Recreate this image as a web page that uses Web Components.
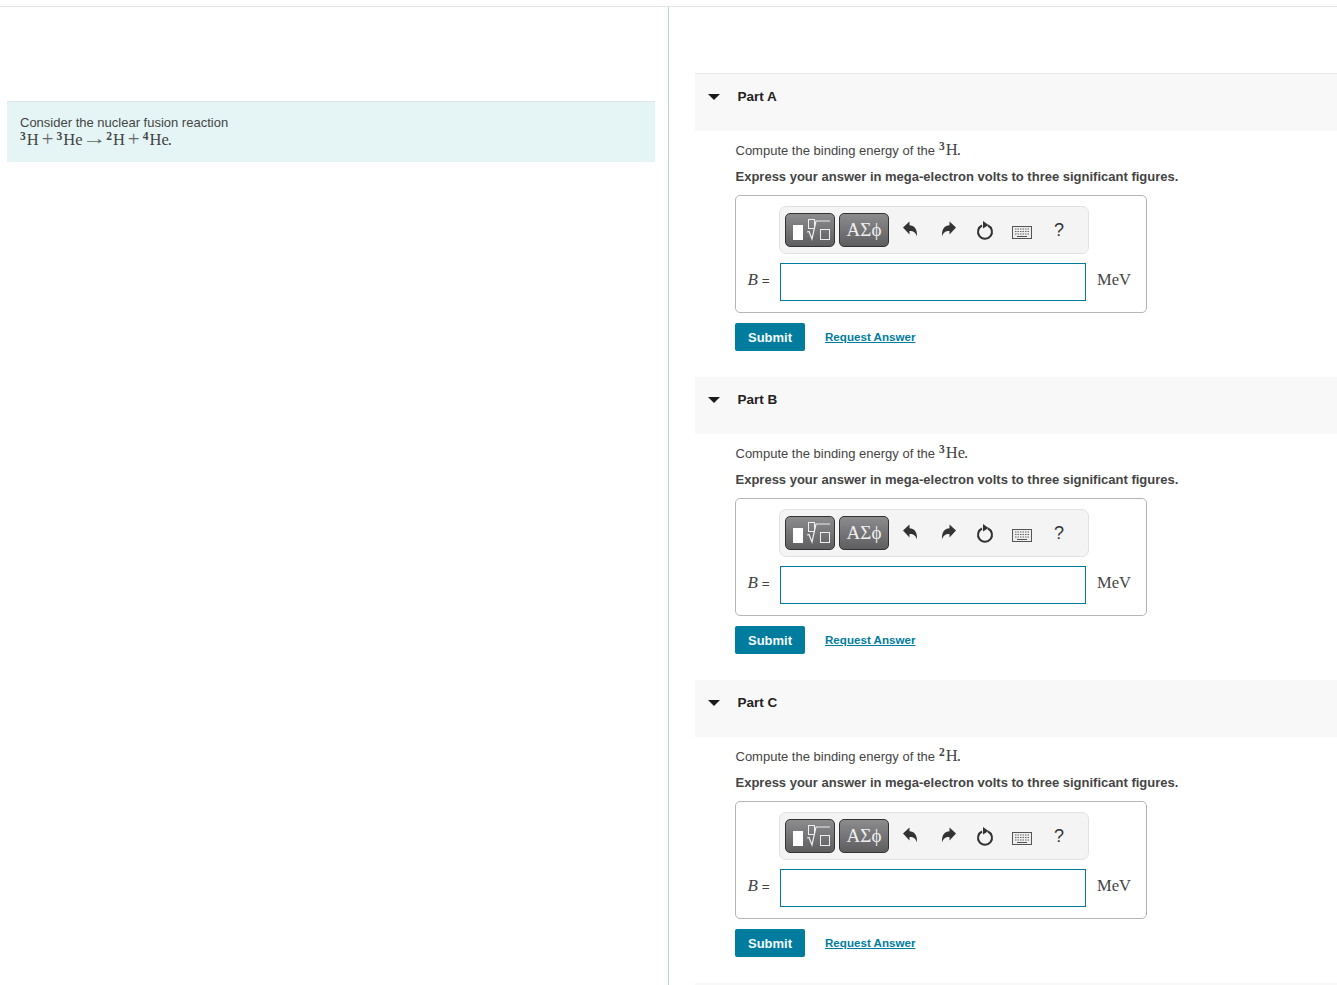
<!DOCTYPE html>
<html lang="en"><head><meta charset="utf-8"><title>Nuclear fusion</title>
<style>
html,body{margin:0;padding:0;background:#fff}
body{font-family:"Liberation Sans",Arial,sans-serif;color:#333;height:985px;overflow:hidden}
</style></head><body>
<m-app>
  <m-intro slot="left">Consider the nuclear fusion reaction<br><m-math style="margin-top:1px"><sup>3</sup>H<i>+</i><sup>3</sup>He<i class="a">→</i><sup>2</sup>H<i>+</i><sup>4</sup>He<span class="dot">.</span></m-math></m-intro>
  <m-part slot="right" name="Part A" iso="3" el="H" first></m-part>
  <m-part slot="right" name="Part B" iso="3" el="He"></m-part>
  <m-part slot="right" name="Part C" iso="2" el="H"></m-part>
  <m-end slot="right"></m-end>
</m-app>
<script>
const def=(name,html)=>customElements.define(name,class extends HTMLElement{
  connectedCallback(){ if(this.shadowRoot) return; const r=this.attachShadow({mode:'open'}); r.innerHTML=typeof html==='function'?html(this):html; }
});
def('m-app',`<style>
:host{display:block}
.top{height:6px;border-bottom:1px solid #e2e6e9}
.main{display:flex;height:978px;overflow:hidden}
.l{width:648px;padding:94px 13px 0 7px;border-right:1px solid #bcd0e0;flex:none}
.r{flex:1;padding:66px 0 0 26px;min-width:0;display:flex;flex-direction:column;gap:26px}
</style><div class="top"></div><div class="main"><div class="l"><slot name="left"></slot></div><div class="r"><slot name="right"></slot></div></div>`);
def('m-end',`<style>:host{display:block;height:3px;flex:none;border-top:1px solid #fff;background:#f8f8f8}</style>`);
def('m-math',`<style>
:host{display:inline-block;font-family:"Liberation Serif","Times New Roman",serif;font-size:16.5px;line-height:16px;color:#444}
::slotted(sup){font-size:11.5px;font-weight:700;vertical-align:5px;line-height:0;margin-right:1px}
::slotted(i){display:inline-block;font-style:normal;font-size:16px;line-height:16px;margin:0 4.4px;color:#666;transform:scale(1.3,1.25)}
::slotted(i.a){font-size:17px;margin:0 3.4px;transform:scaleX(1.45) translateY(-1px)}
::slotted(.dot){margin-left:-1px}
</style><slot></slot>`);
def('m-intro',`<style>
:host{display:block;height:60px;border-top:1px solid #dfe6e8;background:#e5f5f6;font-size:13px;line-height:16px;color:#444}
.i{padding:13px 13px 0}
</style><div class="i"><slot></slot></div>`);
const rootIcon=`<svg width="48" height="32" viewBox="0 0 48 32" aria-hidden="true"><rect x="7" y="11" width="10" height="15" fill="#fff"/><rect x="22.500" y="5.500" width="6" height="9" fill="none" stroke="#eee"/><path d="M21 18l2-.5 3 7.500 4-18h14" fill="none" stroke="#eee" stroke-width="1.200"/><rect x="34.500" y="15.500" width="9" height="10" fill="none" stroke="#eee"/></svg>`;
def('m-part',el=>`<style>
:host{display:block;width:642px;height:277px;flex:none;font-size:13px;line-height:18px;color:#444}
.hd{height:58px;box-sizing:border-box;border-top:1px solid ${el.hasAttribute('first')?'#e3e6e8':'#fff'};background:#f8f8f8;display:flex;align-items:center;padding-bottom:11px}
.tri{width:0;height:0;border:6px solid transparent;border-top:6px solid #1a1a1a;border-bottom:0;margin:0 17.500px 0 13px}
.hd b{font-size:13.5px;color:#222;font-weight:700}
.ct{padding:8px 0 0 40.500px}
.q{height:24px;line-height:24px;display:flex;align-items:center}
.q m-math{margin-left:4px;position:relative;top:-1px}
.ex{font-weight:700;margin:4px 0 0;height:20px;line-height:20px;color:#444;font-size:13px}
.box{box-sizing:border-box;width:412px;height:118px;margin:8px 0 0 -.5px;border:1px solid #b5b5b5;border-radius:5px;padding:10px 0 0 43px}
.tb{box-sizing:border-box;width:310px;height:48px;border:1px solid #e1e1e1;border-radius:7px;background:#f4f4f4;display:flex;align-items:center;padding:0 0 1px 5px}
.btn{box-sizing:border-box;width:50px;height:34px;border:1px solid #333;border-radius:5px;background:linear-gradient(#8c8c8e,#5e5e60);margin-right:4px;display:flex;align-items:center;justify-content:center;color:#eee;font:19px "Liberation Serif",serif;overflow:hidden;flex:none}
.ic{width:37px;height:24px;display:flex;align-items:center;justify-content:center;flex:none}
.ic.q2{font-size:18px;color:#333;font-family:"Liberation Sans",sans-serif}
.ic.kb{padding-top:5px;box-sizing:border-box}
.row{display:flex;align-items:center;height:38px;margin:9px 0 0 -43px}
.lab{width:44px;padding:0 0 4px 11.500px;box-sizing:border-box;white-space:nowrap;font-size:13.5px;color:#444}
.lab i{font:italic 17px "Liberation Serif",serif}
.inp{box-sizing:border-box;width:306px;height:38px;border:1px solid #007c9e;background:#fff;flex:none}
.mev{margin-left:11px;padding-bottom:3px;font:16.500px/1 "Liberation Serif",serif;color:#444}
.act{display:flex;align-items:center;margin:10px 0 0 -.5px;height:28px}
.sub{box-sizing:border-box;width:70px;height:28px;background:#007c9e;color:#f5fbfd;border:0;border-radius:2px;font:700 13px "Liberation Sans",sans-serif;padding:0}
a{margin-left:20px;font-size:11.600px;font-weight:700;color:#007c9e;text-decoration:underline}
</style>
<div class="hd"><span class="tri"></span><b>${el.getAttribute('name')}</b></div>
<div class="ct">
<div class="q">Compute the binding energy of the<m-math><sup style="font-size:11.500px;font-weight:700;vertical-align:5px;line-height:0;margin-right:1px">${el.getAttribute('iso')}</sup>${el.getAttribute('el')}<span style="margin-left:-1px">.</span></m-math></div>
<div class="ex">Express your answer in mega-electron volts to three significant figures.</div>
<div class="box">
<div class="tb">
<div class="btn">${rootIcon}</div><div class="btn">ΑΣϕ</div>
<div class="ic" style="margin-left:-1.500px"><svg width="16" height="17" viewBox="0 0 16 17"><path d="M1 6.500L7.500 .5V4.200C12 4.200 15.500 7.500 15 15.500 14 12 12 10 7.500 10V13.500z" fill="#333"/></svg></div>
<div class="ic" style="margin-left:2px"><svg width="16" height="17" viewBox="0 0 16 17"><path d="M15 6.500L8.500 .5V4.200C4 4.200 .5 7.500 1 15.500 2 12 4 10 8.500 10V13.500z" fill="#333"/></svg></div>
<div class="ic" style="margin-left:-1px"><svg width="18" height="20" viewBox="0 0 18 20"><path d="M6 5.500A7 7 0 1 0 12 5.500" fill="none" stroke="#333" stroke-width="2"/><path d="M7 1l5.500 4L7 8.500z" fill="#333"/></svg></div>
<div class="ic kb"><svg width="20" height="13" viewBox="0 0 20 13"><rect x=".5" y=".5" width="19" height="12" fill="#eee" stroke="#555"/><path d="M3 3h14M3 5.500h14M3 8h14" stroke="#666" stroke-dasharray="1.500 1"/><path d="M5 10.500h10" stroke="#555"/></svg></div>
<div class="ic q2">?</div>
</div>
<div class="row"><span class="lab"><i>B</i> =</span><div class="inp"></div><span class="mev">MeV</span></div>
</div>
<div class="act"><button class="sub">Submit</button><a href="#">Request Answer</a></div>
</div>`);
</script>
</body></html>
